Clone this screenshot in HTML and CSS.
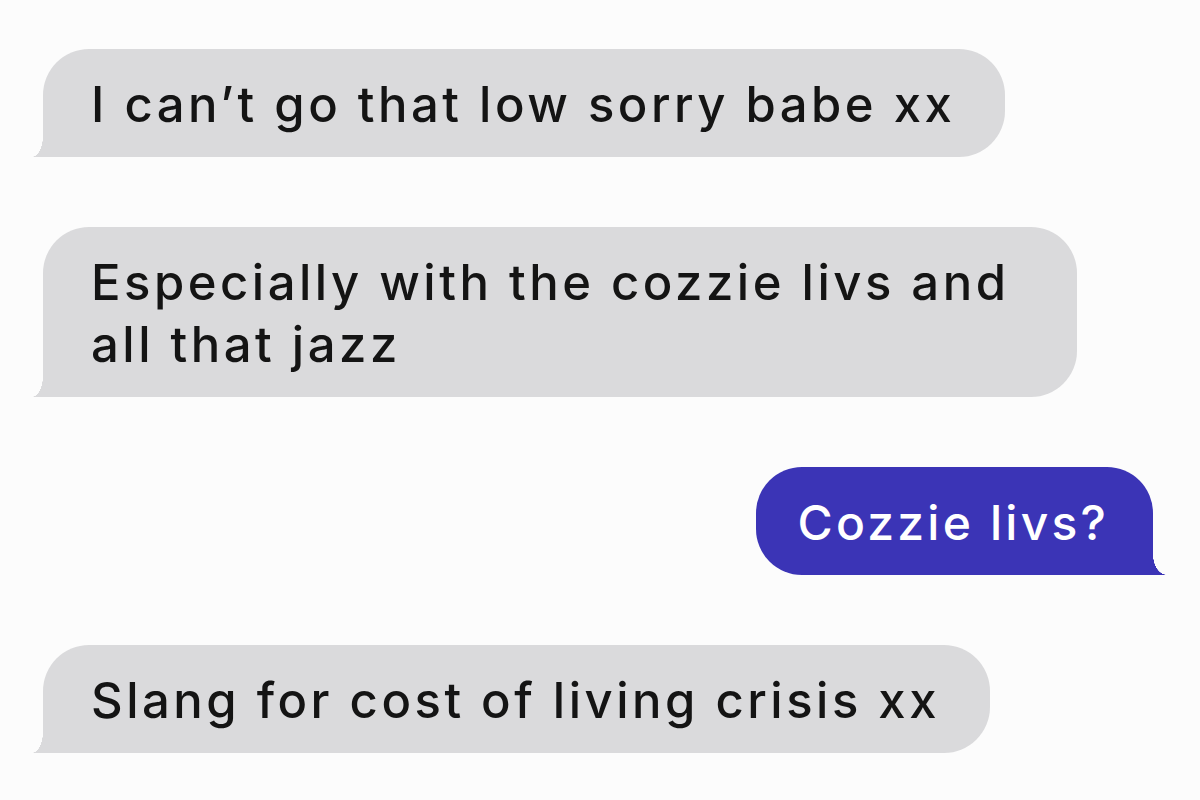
FILE: index.html
```html
<!DOCTYPE html>
<html lang="en">
<head>
<meta charset="utf-8">
<title>Chat</title>
<link rel="stylesheet" href="styles.css">
</head>
<body>
<main class="chat">
  <div class="msg them">I can’t go that low sorry babe xx</div>
  <div class="msg them wrapped">Especially with the cozzie livs and<br>all that jazz</div>
  <div class="msg me">Cozzie livs?</div>
  <div class="msg them">Slang for cost of living crisis xx</div>
</main>
</body>
</html>
```
FILE: styles.css
```css
html, body {
  margin: 0;
  padding: 0;
  background: #fcfcfc;
}

.chat {
  display: flex;
  flex-direction: column;
  gap: 70px;
  padding: 49px 47px 0 43px;
  font-family: "Inter", "Liberation Sans", sans-serif;
}

.msg {
  position: relative;
  font-size: 49px;
  font-weight: 500;
  line-height: 62px;
  letter-spacing: 3.5px;
  padding: 25px 50px 21px 48px;
  border-radius: 46px;
  white-space: nowrap;
}

.them {
  align-self: flex-start;
  background: #dadadc;
  color: #141414;
  border-bottom-left-radius: 0;
}

.wrapped {
  padding-right: 68px;
}

.them::after {
  content: "";
  position: absolute;
  left: -11px;
  bottom: 0;
  width: 11px;
  height: 21px;
  background: radial-gradient(11px 21px at 0 0, transparent 98%, #dadadc 100%);
}

.me {
  align-self: flex-end;
  background: #3b34b6;
  color: #ffffff;
  font-size: 48px;
  letter-spacing: 3.2px;
  padding: 25px 44px 21px 42px;
  border-bottom-right-radius: 0;
}

.me::after {
  content: "";
  position: absolute;
  right: -14px;
  bottom: 0;
  width: 14px;
  height: 20px;
  background: radial-gradient(14px 20px at 100% 0, transparent 98%, #3b34b6 100%);
}
```
